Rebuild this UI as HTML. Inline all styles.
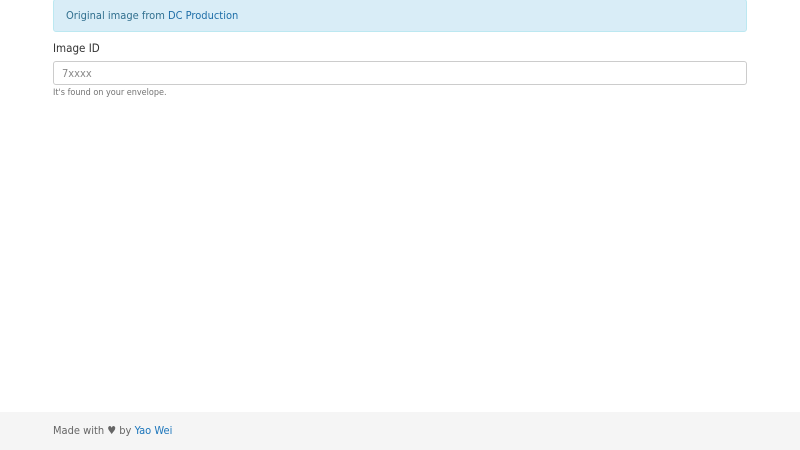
<!DOCTYPE html>
<html><head><style>
body{margin:0;width:800px;height:450px;position:relative;font-family:"DejaVu Sans Condensed","DejaVu Sans",sans-serif;background:#fff;overflow:hidden}
.alert{position:absolute;left:53px;top:-1px;width:692px;height:31px;background:#d9edf7;border:1px solid #bce8f1;border-radius:3px;color:#31708f;font-size:11px;line-height:32px;box-sizing:content-box}
.alert span{margin-left:12px}
a{color:#1b75bb;text-decoration:none}
.alert a{color:#1f6fa8}
.label{position:absolute;left:53px;top:41px;font-size:11.5px;color:#333}
.input{position:absolute;left:53px;top:61px;width:692px;height:22px;border:1px solid #ccc;border-radius:3px;font-size:11px;color:#888;line-height:23px}
.input span{margin-left:8px}
.help{position:absolute;left:53px;top:88px;font-size:9px;color:#737373}
.footer{position:absolute;left:0;top:412px;width:800px;height:38px;background:#f5f5f5;font-size:11px;color:#666;line-height:38px}
.footer span{margin-left:53px}
.footer a{color:#1b75bb}
</style></head><body>
<div class="alert"><span>Original image from <a>DC Production</a></span></div>
<div class="label">Image ID</div>
<div class="input"><span>7xxxx</span></div>
<div class="help">It's found on your envelope.</div>
<div class="footer"><span>Made with ♥ by <a>Yao Wei</a></span></div>
</body></html>
